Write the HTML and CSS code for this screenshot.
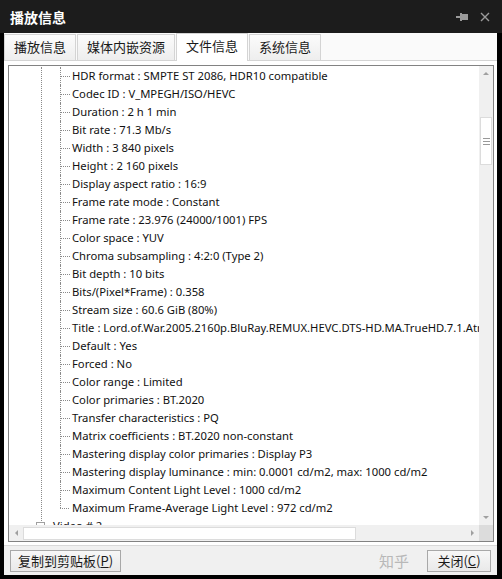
FILE: index.html
```html
<!DOCTYPE html>
<html lang="zh-CN">
<head>
    <meta charset="UTF-8">
    <title>播放信息</title>
    <link rel="stylesheet" href="styles.css">
</head>
<body>
    <div class="window">
        <!-- Title bar -->
        <div class="titlebar">
            <span class="title">播放信息</span>
            <div class="title-icons">
                <svg width="12" height="10" viewBox="0 0 12 10">
                    <rect x="0" y="4" width="4" height="2" fill="#9a9a9a"/>
                    <rect x="4" y="1" width="2" height="8" fill="#9a9a9a"/>
                    <rect x="6" y="2" width="6" height="6" fill="#9a9a9a"/>
                </svg>
                <svg width="10" height="10" viewBox="0 0 10 10">
                    <path d="M1 1 L9 9 M9 1 L1 9" stroke="#9a9a9a" stroke-width="1.4"/>
                </svg>
            </div>
        </div>

        <!-- Tabs -->
        <div class="tabs">
            <div class="tab">播放信息</div>
            <div class="tab">媒体内嵌资源</div>
            <div class="tab active">文件信息</div>
            <div class="tab">系统信息</div>
        </div>

        <div class="page">
            <div class="listbox">
                <div class="viewport">
                    <div class="tree">
                        <div class="group">
                            <div class="row">HDR format : SMPTE ST 2086, HDR10 compatible</div>
                            <div class="row">Codec ID : V_MPEGH/ISO/HEVC</div>
                            <div class="row">Duration : 2 h 1 min</div>
                            <div class="row">Bit rate : 71.3 Mb/s</div>
                            <div class="row">Width : 3 840 pixels</div>
                            <div class="row">Height : 2 160 pixels</div>
                            <div class="row">Display aspect ratio : 16:9</div>
                            <div class="row">Frame rate mode : Constant</div>
                            <div class="row">Frame rate : 23.976 (24000/1001) FPS</div>
                            <div class="row">Color space : YUV</div>
                            <div class="row">Chroma subsampling : 4:2:0 (Type 2)</div>
                            <div class="row">Bit depth : 10 bits</div>
                            <div class="row">Bits/(Pixel*Frame) : 0.358</div>
                            <div class="row">Stream size : 60.6 GiB (80%)</div>
                            <div class="row">Title : Lord.of.War.2005.2160p.BluRay.REMUX.HEVC.DTS-HD.MA.TrueHD.7.1.Atmos-FGT</div>
                            <div class="row">Default : Yes</div>
                            <div class="row">Forced : No</div>
                            <div class="row">Color range : Limited</div>
                            <div class="row">Color primaries : BT.2020</div>
                            <div class="row">Transfer characteristics : PQ</div>
                            <div class="row">Matrix coefficients : BT.2020 non-constant</div>
                            <div class="row">Mastering display color primaries : Display P3</div>
                            <div class="row">Mastering display luminance : min: 0.0001 cd/m2, max: 1000 cd/m2</div>
                            <div class="row">Maximum Content Light Level : 1000 cd/m2</div>
                            <div class="row last">Maximum Frame-Average Light Level : 972 cd/m2</div>
                        </div>
                        <div class="node"><span class="expander"></span>Video # 2</div>
                    </div>
                </div>
                <div class="vscroll">
                    <div class="arrow up"></div>
                    <div class="track">
                        <div class="thumb"><span class="grip"></span></div>
                    </div>
                    <div class="arrow down"></div>
                </div>
                <div class="hscroll">
                    <div class="arrow left"></div>
                    <div class="hthumb"></div>
                    <div class="arrow right"></div>
                </div>
                <div class="corner"></div>
            </div>
        </div>

        <!-- Buttons -->
        <div class="footer">
            <button class="btn">复制到剪贴板(<u>P</u>)</button>
            <div class="right">
                <span class="watermark">知乎</span>
                <button class="btn close">关闭(<u>C</u>)</button>
            </div>
        </div>
    </div>
</body>
</html>
```

FILE: styles.css
```css
body {
    margin: 0;
    background: #000;
    font-family: "Noto Sans CJK SC", sans-serif;
}

.window {
    width: 502px;
    height: 579px;
    background: #000;
    display: flex;
    flex-direction: column;
}

/* Title bar */
.titlebar {
    height: 33px;
    background: #1c1c1c;
    display: flex;
    align-items: center;
    justify-content: space-between;
    padding: 0 12px 0 10px;
}

.title {
    color: #fff;
    font-size: 14px;
    font-weight: bold;
}

.title-icons {
    display: flex;
    align-items: center;
    gap: 12px;
}

/* Tabs */
.tabs {
    margin: 0 5px 0 4px;
    height: 27px;
    background: #fafafa;
    display: flex;
    align-items: flex-end;
    border-bottom: 1px solid #d4d4d4;
}

.tab {
    height: 26px;
    line-height: 24px;
    padding: 0 9px;
    font-size: 13px;
    color: #1a1a1a;
    background: linear-gradient(#fbfbfb, #eeeeee);
    border: 1px solid #d4d4d4;
    border-bottom: none;
    margin-right: 1px;
    box-sizing: border-box;
}

.tab.active {
    background: #fff;
    height: 28px;
    margin-bottom: -1px;
}

/* Page */
.page {
    margin: 0 5px 0 4px;
    background: #fff;
    padding: 4px 0 3px 4px;
    border-bottom: 1px solid #d9d9d9;
}

.listbox {
    width: 484px;
    height: 475px;
    border: 1px solid #828282;
    display: grid;
    grid-template-columns: 1fr 14px;
    grid-template-rows: 1fr 16px;
    background: #fff;
}

.viewport {
    overflow: hidden;
    font-family: "Noto Sans", sans-serif;
    font-size: 11.25px;
    color: #111;
}

.tree {
    margin: 1px 0 0 32px;
    border-left: 1px dotted #8a8a8a;
}

.group {
    margin-left: 18px;
}

.row {
    height: 18px;
    line-height: 18px;
    padding-left: 11px;
    white-space: nowrap;
    border-left: 1px dotted #8a8a8a;
    position: relative;
}

.row::before {
    content: "";
    position: absolute;
    left: 0;
    top: 9px;
    width: 9px;
    border-top: 1px dotted #8a8a8a;
}

.row.last {
    border-left: none;
    padding-left: 12px;
}

.row.last::after {
    content: "";
    position: absolute;
    left: 0;
    top: 0;
    height: 9px;
    border-left: 1px dotted #8a8a8a;
}

.node {
    height: 18px;
    line-height: 18px;
    padding-left: 10px;
    margin-left: -6px;
    display: flex;
    align-items: center;
    gap: 8px;
}

.expander {
    width: 9px;
    height: 9px;
    border: 1px solid #a0a0a0;
    background: #fff;
    box-sizing: border-box;
    margin-left: -10px;
}

/* Scrollbars */
.vscroll {
    background: #f0f0f0;
    display: flex;
    flex-direction: column;
}

.track {
    flex: 1;
    padding-top: 36px;
}

.thumb {
    height: 46px;
    margin: 0 1px;
    background: #fff;
    border: 1px solid #dcdcdc;
    display: flex;
    align-items: center;
    justify-content: center;
}

.grip {
    width: 7px;
    height: 5px;
    border-top: 1px solid #999;
    border-bottom: 1px solid #999;
    position: relative;
}

.grip::after {
    content: "";
    position: absolute;
    left: 0;
    right: 0;
    top: 2px;
    border-top: 1px solid #999;
}

.arrow {
    width: 14px;
    height: 15px;
    display: flex;
    align-items: center;
    justify-content: center;
}

.arrow::after {
    content: "";
    border: 3px solid transparent;
}

.arrow.up::after { border-bottom-color: #a0a0a0; border-top-width: 0; }
.arrow.down::after { border-top-color: #a0a0a0; border-bottom-width: 0; }
.arrow.left::after { border-right-color: #a0a0a0; border-left-width: 0; }
.arrow.right::after { border-left-color: #a0a0a0; border-right-width: 0; }

.hscroll {
    background: #f0f0f0;
    display: flex;
    align-items: center;
}

.hthumb {
    width: 333px;
    height: 13px;
    background: #fff;
    border: 1px solid #dcdcdc;
    box-sizing: border-box;
}

.hscroll .arrow.right {
    margin-left: auto;
}

.corner {
    background: #dcdcdc;
}

/* Footer */
.footer {
    flex: 1;
    margin: 0 5px 4px 4px;
    background: #f0f0f0;
    display: flex;
    align-items: center;
    justify-content: space-between;
    padding: 0 6px 0 6px;
}

.btn {
    height: 22px;
    padding: 0 7px;
    font-family: "Noto Sans CJK SC", sans-serif;
    font-size: 13px;
    color: #1a1a1a;
    background: linear-gradient(#f7f7f7, #e9e9e9);
    border: 1px solid #a8a8a8;
    line-height: 18px;
}

.right {
    display: flex;
    align-items: center;
    gap: 18px;
}

.watermark {
    font-size: 15px;
    color: #b8b8b8;
    white-space: nowrap;
}

.btn.close {
    width: 64px;
}
```
